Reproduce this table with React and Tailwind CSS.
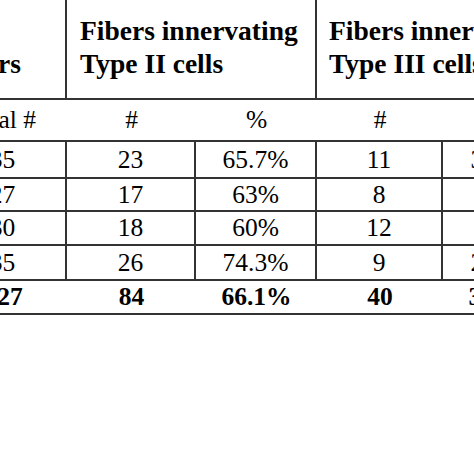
const rows = [
  { total: "35", t2n: "23", t2p: "65.7%", t3n: "11", t3p: "31.4%", h: "h-[37px]" },
  { total: "27", t2n: "17", t2p: "63%", t3n: "8", t3p: "30%", h: "h-[33px]" },
  { total: "30", t2n: "18", t2p: "60%", t3n: "12", t3p: "40%", h: "h-[34px]" },
  { total: "35", t2n: "26", t2p: "74.3%", t3n: "9", t3p: "25.7%", h: "h-[35px]" },
];

const line = "border-[#333333]";

function Cell({ w, children, right = true, bold = false, shift = "" }) {
  return (
    <div
      className={`${w} shrink-0 flex items-center justify-center ${shift} ${right ? `border-r-2 ${line}` : ""} ${bold ? "font-bold" : ""}`}
    >
      {children}
    </div>
  );
}

export default function App() {
  return (
    <div
      className="w-[474px] h-[474px] overflow-hidden bg-white text-black"
      style={{ fontFamily: '"Liberation Serif", "Times New Roman", serif' }}
    >
      <div className="ml-[-66px] mt-[-6px] w-[630px] flex flex-col text-[25.5px] leading-none">
        {/* header */}
        <div className={`flex h-[106px] border-y-2 ${line} text-[27.5px] leading-[33px] font-bold`}>
          <div className={`w-[133px] shrink-0 flex items-center justify-end pr-[44px] border-r-2 ${line}`}>
            <div className="text-left whitespace-nowrap">
              Total
              <br />
              number of fibers
            </div>
          </div>
          <div className={`w-[250px] shrink-0 flex items-center pl-[13px] border-r-2 ${line}`}>
            <div className="whitespace-nowrap">
              Fibers innervating
              <br />
              Type II cells
            </div>
          </div>
          <div className="w-[247px] shrink-0 flex items-center pl-[12px]">
            <div className="whitespace-nowrap">
              Fibers innervating
              <br />
              Type III cells
            </div>
          </div>
        </div>

        {/* sub header */}
        <div className={`flex h-[42px] border-b-2 ${line}`}>
          <Cell w="w-[133px]" right={false}>Total #</Cell>
          <Cell w="w-[129px]" right={false}>#</Cell>
          <Cell w="w-[121px]" right={false}>%</Cell>
          <Cell w="w-[126px]" right={false}>#</Cell>
          <Cell w="w-[121px]" right={false}>%</Cell>
        </div>

        {rows.map((r, i) => (
          <div key={i} className={`flex ${r.h} border-b-2 ${line}`}>
            <Cell w="w-[133px]" shift="pl-[6px]">{r.total}</Cell>
            <Cell w="w-[129px]">{r.t2n}</Cell>
            <Cell w="w-[121px]">{r.t2p}</Cell>
            <Cell w="w-[126px]">{r.t3n}</Cell>
            <Cell w="w-[121px]" right={false}>{r.t3p}</Cell>
          </div>
        ))}

        {/* total */}
        <div className={`flex h-[34px] border-b-2 ${line}`}>
          <Cell w="w-[133px]" right={false} bold shift="pl-[6px]">127</Cell>
          <Cell w="w-[129px]" right={false} bold>84</Cell>
          <Cell w="w-[121px]" right={false} bold>66.1%</Cell>
          <Cell w="w-[126px]" right={false} bold>40</Cell>
          <Cell w="w-[121px]" right={false} bold>31.5%</Cell>
        </div>
      </div>
    </div>
  );
}
